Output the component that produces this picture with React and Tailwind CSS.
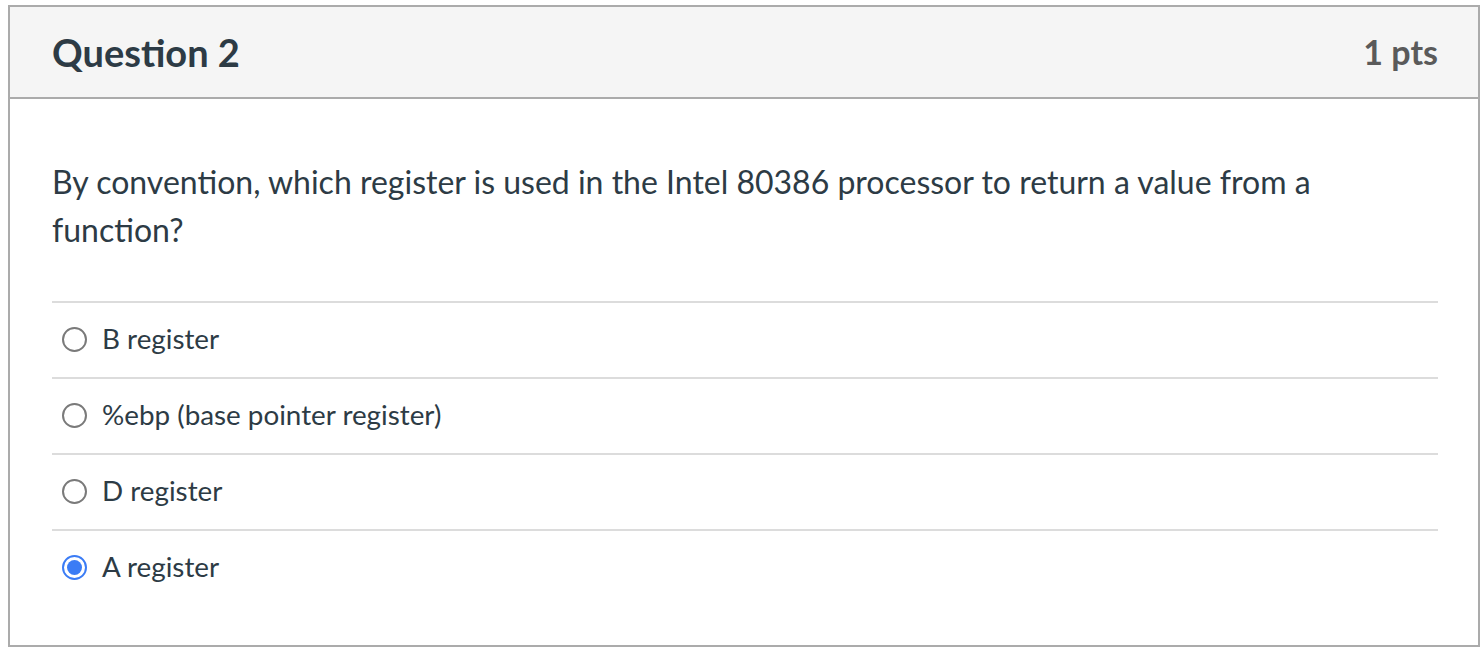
import React from "react";

const answers = [
  { label: "B register", selected: false },
  { label: "%ebp (base pointer register)", selected: false },
  { label: "D register", selected: false },
  { label: "A register", selected: true },
];

function Radio({ selected }) {
  if (selected) {
    return (
      <span className="flex h-[25px] w-[25px] shrink-0 items-center justify-center rounded-full border-[2.5px] border-[#3b7cf5] bg-white">
        <span className="h-[15px] w-[15px] rounded-full bg-[#3b7cf5]" />
      </span>
    );
  }
  return <span className="h-[25px] w-[25px] shrink-0 rounded-full border-[2px] border-[#7a7a7a] bg-white" />;
}

export default function App() {
  return (
    <div
      className="min-h-[657px] w-[1482px] bg-white pl-[8px] pt-[5px]"
      style={{ fontFamily: "Lato, 'Noto Sans', sans-serif" }}
    >
      <div className="flex h-[642px] w-[1472px] flex-col border-2 border-[#ababab]">
        <div className="flex h-[92px] items-center justify-between border-b-2 border-[#ababab] bg-[#f5f5f5] pl-[42px] pr-[40px]">
          <h2 className="text-[38px] font-bold leading-none text-[#2d3b45]">Question 2</h2>
          <span className="text-[34px] font-bold leading-none text-[#5a5a5a]">1 pts</span>
        </div>
        <div className="pl-[42px] pr-[40px] pt-[59px]">
          <p className="max-w-[1330px] text-[32px] leading-[48px] text-[#2d3b45]">
            By convention, which register is used in the Intel 80386 processor to return a value from a
            function?
          </p>
          <div className="mt-[47px]">
            {answers.map((a) => (
              <div
                key={a.label}
                className="flex h-[76px] items-center gap-[15px] border-t-2 border-[#dcdcdc] pl-[10px] pb-[2px]"
              >
                <Radio selected={a.selected} />
                <span className="text-[27.8px] text-[#2d3b45]">{a.label}</span>
              </div>
            ))}
          </div>
        </div>
      </div>
    </div>
  );
}
